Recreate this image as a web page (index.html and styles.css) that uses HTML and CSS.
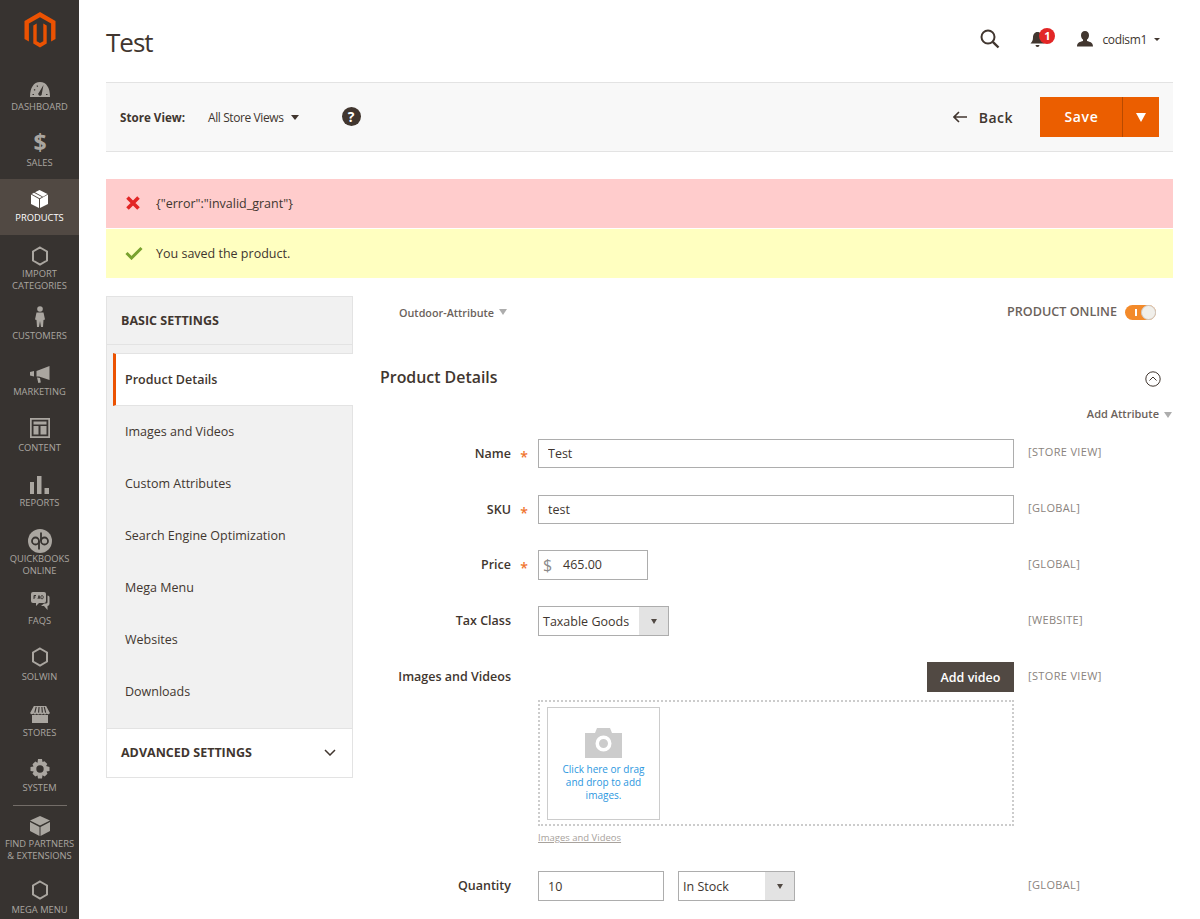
FILE: index.html
```html
<!DOCTYPE html>
<html lang="en">
<head>
<meta charset="utf-8">
<title>Test</title>
<link rel="stylesheet" href="styles.css">
</head>
<body>
<div class="app">
<nav class="sidebar">
  <div class="logo">
    <svg width="32" height="36" viewBox="0 0 32 36"><path fill="#eb5202" d="M16 0 0.500 9v18l4.400 2.600V11.600L16 5.200l11.100 6.400v18l4.400-2.600V9z"/><path fill="#eb5202" d="M16 31.100l-3.300-1.900V11.500L9.300 13.500v18L16 35.500l6.700-4V13.500l-3.400-2v17.700z"/></svg>
  </div>
  <a class="nav-item"><svg class="ic" width="20" height="15" viewBox="0 0 20 15"><path d="M10 0C3.500 0 0 6 0 15h20C20 6 16.500 0 10 0z"/><path d="M13.500 3 9 10.500a1.800 1.800 0 1 0 2.800 1.200z" fill="#373330"/><path d="M2.500 12.500H4M4 7.500l1.200.8M7 3.500l.6 1.200M16 12.500h1.500" stroke="#373330" stroke-width="1.200" fill="none"/></svg><span>Dashboard</span></a>
  <a class="nav-item"><svg class="ic dollar-ic" width="20" height="22" viewBox="0 0 20 22"><text class="dollar" x="10" y="20" text-anchor="middle">$</text></svg><span>Sales</span></a>
  <a class="nav-item active"><svg class="ic" width="17" height="18" viewBox="0 0 17 18"><path d="M0 4.500 8 9v9l-8-4z"/><path d="M9 9l8-4.500V14l-8 4z" fill="#fff"/><path d="M8.500 0 4 2.200l8 4.500L16.500 4zM3 2.800.8 4l7.700 4.200L11 7z" fill="#fff"/></svg><span>Products</span></a>
  <a class="nav-item two hexi"><svg class="ic" width="18" height="20" viewBox="0 0 18 20"><path class="hex" d="M9 1.500 16 5.500v9l-7 4-7-4v-9z"/></svg><span>Import Categories</span></a>
  <a class="nav-item tight"><svg class="ic" width="12" height="21" viewBox="0 0 12 21"><circle cx="6" cy="3" r="2.800"/><path d="M2.500 6.500h7L11 13.500 9.500 14 9 21H7l-1-6-1 6H3l-.5-7L1 13.500z"/></svg><span>Customers</span></a>
  <a class="nav-item tight"><svg class="ic" width="20" height="17" viewBox="0 0 20 17"><path d="M19.500 0v14L9 10.500H6.500V5L19.500 0zM0 6l4-1v5.500l-4-1zM7 11.500l3 .6.800 4.400-2.500.5z"/></svg><span>Marketing</span></a>
  <a class="nav-item"><svg class="ic" width="20" height="20" viewBox="0 0 20 20"><path fill-rule="evenodd" d="M0 0h20v20H0zM1.700 1.700v16.600h16.600V1.700zM3.500 3.500h13v3h-13zM3.500 8h5v8.500h-5zM10.500 8h6v8.500h-6z"/></svg><span>Content</span></a>
  <a class="nav-item tight"><svg class="ic" width="19" height="18" viewBox="0 0 19 18"><path d="M0 6h4v12H0zM7 0h4.500v18H7zM14.500 12H19v6h-4.500z"/></svg><span>Reports</span></a>
  <a class="nav-item two qb"><svg class="ic" width="24" height="24" viewBox="0 0 24 24"><circle cx="12" cy="12" r="12"/><path d="M11 12v8.500M13 12V3.500" stroke="#373330" stroke-width="1.800" fill="none"/><circle cx="7.500" cy="12" r="3.500" fill="none" stroke="#373330" stroke-width="1.800"/><circle cx="16.500" cy="12" r="3.500" fill="none" stroke="#373330" stroke-width="1.800"/></svg><span>QuickBooks Online</span></a>
  <a class="nav-item"><svg class="ic" width="20" height="19" viewBox="0 0 20 19"><path d="M3 0h11a2 2 0 0 1 2 2v7a2 2 0 0 1-2 2H9l-3 3v-3H3a2 2 0 0 1-2-2V2a2 2 0 0 1 2-2z"/><path d="M17.500 3.500c1.500 0 2 1 2 2v6c0 1.500-1 2.500-2 2.500v4l-3.500-4h-3l3-2.500h2c1.500 0 1.500-1 1.500-2z"/><path d="M4 3.500h2M4 3.500v3.500M4 5h1.500M8 7l1-3.500L10 7M12 3.500a1.200 1.700 0 1 0 .1 0" stroke="#373330" fill="none"/></svg><span>FAQs</span></a>
  <a class="nav-item"><svg class="ic" width="18" height="20" viewBox="0 0 18 20"><path class="hex" d="M9 1.500 16 5.500v9l-7 4-7-4v-9z"/></svg><span>Solwin</span></a>
  <a class="nav-item stores"><svg class="ic" width="22" height="17" viewBox="0 0 22 18"><path d="M2.500 9.500h17V18h-17z"/><path d="M4.500 0h13l4 7.500a2 2 0 0 1-3.500.5 2 2 0 0 1-3.500 0 2 2 0 0 1-3.500 0 2 2 0 0 1-3.500 0A2 2 0 0 1 4 8a2 2 0 0 1-3.500-.5z"/><path d="M7 1 5.500 7M10 1l-.5 6M13 1l.5 6M15.500 1 17 7" stroke="#373330" stroke-width="1.200" fill="none"/></svg><span>Stores</span></a>
  <a class="nav-item tight"><svg class="ic" width="20" height="20" viewBox="0 0 20 20"><path fill-rule="evenodd" d="M8 0h4l.5 3 2-.8 2.800 2.800-1.200 2L19.500 8v4l-3 .5 1 2.200-2.800 2.800-2.200-1.200L12 19.500H8l-.5-3-2.200 1L2.500 14.700l1.200-2.200L.5 12V8l3-.5-1-2.200L5.300 2.500l2.200 1.200zM10 6.300a3.700 3.700 0 1 0 0 7.400 3.700 3.700 0 0 0 0-7.400z"/></svg><span>System</span></a>
  <hr class="nav-sep">
  <a class="nav-item two partners"><svg class="ic" width="22" height="20" viewBox="0 0 22 20"><path d="M11 0l10 4.500-10 5L1 4.500z"/><path d="M1 6l9.500 5v9L1 15zM21 6l-9.500 5v9l9.500-5z"/></svg><span>Find Partners<br>&amp; Extensions</span></a>
  <a class="nav-item"><svg class="ic" width="18" height="20" viewBox="0 0 18 20"><path class="hex" d="M9 1.500 16 5.500v9l-7 4-7-4v-9z"/></svg><span>Mega Menu</span></a>
</nav>
<main class="main">
  <header class="topbar">
    <h1 class="title">Test</h1>
    <div class="tools">
      <svg class="tool-search" width="20" height="20" viewBox="0 0 20 20"><circle cx="8" cy="8" r="6.500" fill="none" stroke="#41362f" stroke-width="2"/><path d="M12.800 12.800 18.500 18.500" stroke="#41362f" stroke-width="2.400"/></svg>
      <div class="bell">
        <svg width="15" height="17" viewBox="0 0 15 17"><path fill="#41362f" d="M7.500 1C4.500 1 3 3.500 3 6.500c0 3-1 4.500-2.500 6h14C13 11 12 9.500 12 6.500 12 3.500 10.500 1 7.500 1zM5.500 14h4a2 2 0 0 1-4 0z"/></svg>
        <span class="badge">1</span>
      </div>
      <div class="user">
        <svg width="18" height="16" viewBox="0 0 18 16"><path fill="#41362f" d="M9 0c2.500 0 4 1.700 4 4.200 0 2-1 3.600-2 4.400v1.400c3 .8 6 1.600 6 5.500H1c0-3.900 3-4.700 6-5.500V8.600c-1-.8-2-2.400-2-4.400C5 1.700 6.500 0 9 0z"/></svg>
        <span class="user-name">codism1</span>
        <span class="caret small"></span>
      </div>
    </div>
  </header>
  <section class="actions">
    <div class="scope">
      <strong>Store View:</strong>
      <span class="scope-val">All Store Views</span>
      <span class="caret"></span>
      <span class="help">?</span>
    </div>
    <div class="action-btns">
      <button class="back"><svg width="14" height="12" viewBox="0 0 14 12"><path d="M6 1 1 6l5 5M1 6h13" fill="none" stroke="#41362f" stroke-width="1.600"/></svg>Back</button>
      <div class="save"><span class="save-main">Save</span><span class="save-drop"><i></i></span></div>
    </div>
  </section>
  <section class="messages">
    <div class="msg err"><svg width="14" height="14" viewBox="0 0 14 14"><path d="M1.500 1.500 12.500 12.500M12.500 1.500 1.500 12.500" stroke="#e22626" stroke-width="3.600"/></svg><span>{"error":"invalid_grant"}</span></div>
    <div class="msg ok"><svg width="18" height="14" viewBox="0 0 18 14"><path d="M1.500 7 6.500 12 16.500 2" fill="none" stroke="#79a22e" stroke-width="3"/></svg><span>You saved the product.</span></div>
  </section>
  <div class="content">
    <aside class="tabs">
      <div class="tab-head">Basic Settings</div>
      <ul class="tab-list">
        <li class="tab current">Product Details</li>
        <li class="tab">Images and Videos</li>
        <li class="tab">Custom Attributes</li>
        <li class="tab">Search Engine Optimization</li>
        <li class="tab">Mega Menu</li>
        <li class="tab">Websites</li>
        <li class="tab">Downloads</li>
      </ul>
      <div class="tab-foot">Advanced Settings<svg width="12" height="7" viewBox="0 0 12 7"><path d="M1 1l5 5 5-5" fill="none" stroke="#41362f" stroke-width="1.500"/></svg></div>
    </aside>
    <section class="form">
      <div class="form-top">
        <span class="attr-set">Outdoor-Attribute<i class="tri"></i></span>
        <span class="online">Product Online<span class="toggle"><span class="knob"></span></span></span>
      </div>
      <div class="sec-head">
        <h2>Product Details</h2>
        <svg width="16" height="16" viewBox="0 0 16 16"><circle cx="8" cy="8" r="7.200" fill="none" stroke="#41362f"/><path d="M4.500 9.500 8 6l3.500 3.500" fill="none" stroke="#41362f"/></svg>
      </div>
      <div class="add-attr">Add Attribute<i class="tri"></i></div>
      <div class="row hi name"><label>Name<em>*</em></label><div class="ctl"><input class="inp" value="Test"></div><span class="sc">[STORE VIEW]</span></div>
      <div class="row hi sku"><label>SKU<em>*</em></label><div class="ctl"><input class="inp" value="test"></div><span class="sc">[GLOBAL]</span></div>
      <div class="row lo"><label>Price<em>*</em></label><div class="ctl"><div class="price"><span>$</span>465.00</div></div><span class="sc">[GLOBAL]</span></div>
      <div class="row lo"><label>Tax Class</label><div class="ctl"><div class="sel tax">Taxable Goods<span class="sel-btn"><i></i></span></div></div><span class="sc">[WEBSITE]</span></div>
      <div class="row images">
        <label>Images and Videos</label>
        <div class="ctl">
          <div class="vid-row"><button class="add-video">Add video</button></div>
          <div class="gallery">
            <div class="upload">
              <svg width="37" height="30" viewBox="0 0 37 30"><path fill="#ccc" fill-rule="evenodd" d="M0 5h10l2-5h13l2 5h10v25H0zM18.500 7.500a8 8 0 1 0 0 16 8 8 0 0 0 0-16zM18.500 11a4.500 4.500 0 1 1 0 9 4.500 4.500 0 0 1 0-9z"/></svg>
              <p>Click here or drag and drop to add images.</p>
            </div>
          </div>
          <a class="caption">Images and Videos</a>
        </div>
        <span class="sc">[STORE VIEW]</span>
      </div>
      <div class="row qty"><label>Quantity</label><div class="ctl qty-ctl"><input class="inp qty-inp" value="10"><div class="sel stock">In Stock<span class="sel-btn"><i></i></span></div></div><span class="sc">[GLOBAL]</span></div>
    </section>
  </div>
</main>
</div>
</body>
</html>
```
FILE: styles.css
```css
*{box-sizing:border-box}
html,body{margin:0;padding:0;height:919px;overflow:hidden;background:#fff}
body{font-family:"Open Sans",sans-serif;color:#41362f;font-size:12.500px}
.app{display:flex;height:919px;overflow:hidden}
.sidebar{width:79px;flex:none;background:#373330;display:flex;flex-direction:column;overflow:hidden}
.logo{height:68px;flex:none;display:flex;justify-content:center;padding-top:12px}
.nav-item{height:55.700px;flex:none;display:flex;flex-direction:column;align-items:center;justify-content:flex-end;padding-bottom:10.500px;color:#aaa6a0;font-size:9.350px;line-height:12px;text-transform:uppercase;text-align:center}
.nav-item.two{height:62px;padding-bottom:5.500px}
.nav-item.active{background:#514943;color:#fff;padding-bottom:11.500px}
.nav-item.stores{padding-bottom:9.500px}
.nav-item.two.qb{padding-bottom:4.500px}
.nav-item span:last-child{display:block;padding:0 2px}
.nav-item .ic{fill:#aaa6a0;margin-bottom:4px;flex:none}
.nav-item .dollar-ic{overflow:visible}
.nav-item.tight .ic{margin-bottom:3px}
.nav-item.hexi .ic{margin-bottom:2px}
.nav-item.qb .ic{margin-bottom:0}
.nav-item .hex{fill:none;stroke:#aaa6a0;stroke-width:2}
.nav-item.active .ic{fill:#fff}
.dollar{font-size:23px;font-weight:700;fill:#aaa6a0}
.nav-sep{width:54px;height:1px;border:0;background:#736d68;margin:0 auto 3px;flex:none}
.nav-item.two.partners{padding:0 0 8.500px}
.partners .ic{margin-bottom:2px}
.partners span:last-child{padding:0}
.main{flex:1;padding:0 27px;min-width:0}
.topbar{height:83px;display:flex;justify-content:space-between;align-items:flex-start;border-bottom:1px solid #e3e3e3}
.title{margin:24px 0 0;font-size:26px;line-height:36px;font-weight:400;letter-spacing:-1px}
.tools{display:flex;align-items:center;height:20px;margin-top:29px;padding-right:13px}
.tool-search{margin-right:30px}
.bell{position:relative;width:15px;height:17px;margin-right:31px}
.bell svg{display:block}
.badge{position:absolute;left:9px;top:-3px;width:16px;height:16px;border-radius:50%;background:#e22626;color:#fff;font-size:11px;font-weight:700;line-height:16px;text-align:center}
.user{display:flex;align-items:center}
.user-name{font-size:12px;margin:0 7px 0 8px;color:#41362f;letter-spacing:-.35px}
.caret{display:inline-block;width:0;height:0;border-style:solid;border-width:5px 4.500px 0;border-color:#41362f transparent transparent}
.caret.small{border-width:3.500px 3.500px 0}
.actions{height:69px;background:#f8f8f8;border-bottom:1px solid #e3e3e3;display:flex;align-items:center;justify-content:space-between;padding:0 14px}
.scope{display:flex;align-items:center;font-size:12px}
.scope strong{font-weight:700;width:88px;font-size:11.650px}
.scope-val{letter-spacing:-.4px;margin-right:7px}
.help{width:19px;height:19px;border-radius:50%;background:#41362f;color:#fff;font-size:14px;font-weight:700;line-height:19px;text-align:center;margin-left:43px;margin-top:-2px}
.action-btns{display:flex;align-items:center}
.back{background:none;border:0;padding:0;margin-right:27px;font:600 14px "Open Sans",sans-serif;color:#41362f;display:flex;align-items:center;gap:12px;letter-spacing:.5px}
.save{display:flex;width:119px;height:40px;background:#eb5e00;color:#fff}
.save-main{width:83px;text-align:center;font-weight:600;font-size:14px;line-height:40px;letter-spacing:.7px;border-right:1px solid #b84a00;padding-left:1px}
.save-drop{flex:1;display:flex;align-items:center;justify-content:center}
.save-drop i{width:0;height:0;border-style:solid;border-width:9px 5.500px 0;border-color:#fff transparent transparent}
.messages{margin-top:27px;display:flex;flex-direction:column;gap:1px}
.msg{height:49px;display:flex;align-items:center;padding-left:20px;font-size:12.500px;padding-bottom:1px}
.msg.err{background:#fcc}
.msg.err svg{margin-right:16px}
.msg.ok{background:#ffffc0;padding-left:19px}
.msg.ok svg{margin-right:13px}
.content{display:flex;margin-top:18px}
.tabs{width:247px;flex:none}
.tab-head{height:49px;background:#f1f1f1;border:1px solid #e3e3e3;padding-left:14px;line-height:47px;font-weight:700;font-size:12.500px;text-transform:uppercase}
.tab-list{list-style:none;margin:0;padding:8px 0 0 6px;background:#f1f1f1;border-left:1px solid #e3e3e3;border-right:1px solid #e3e3e3;height:383px}
.tab{height:52px;line-height:54px;padding-left:12px;font-size:12.500px}
.tab.current{background:#fff;border-left:3px solid #eb5202;font-weight:600;padding-left:9px;border-top:1px solid #e3e3e3;border-bottom:1px solid #e3e3e3;margin-right:-1px;height:53px;margin-bottom:-1px;line-height:52px}
.tab-foot{height:50px;border:1px solid #e3e3e3;padding:0 16px 1px 14px;display:flex;align-items:center;justify-content:space-between;font-weight:700;font-size:12.500px;text-transform:uppercase}
.form{flex:1;padding-left:27px;min-width:0}
.form-top{height:32px;display:flex;justify-content:space-between;align-items:center;padding:0 17px 0 19px}
.attr-set{font-size:10.800px;font-weight:600;color:#6b625b;display:flex;align-items:center}
.tri{display:inline-block;width:0;height:0;border-style:solid;border-width:6px 4px 0;border-color:#adadad transparent transparent;margin-left:5px}
.online{font-weight:600;font-size:12.600px;text-transform:uppercase;color:#6b625b;display:flex;align-items:center;line-height:15px;padding-bottom:2px}
.toggle{width:31px;height:15px;border-radius:8px;background:#f38a2a;margin-left:8px;position:relative;display:block;top:1px}
.toggle:before{content:"";position:absolute;left:10px;top:4px;width:1.500px;height:7px;background:#fff}
.knob{position:absolute;right:0;top:0;width:15px;height:15px;border-radius:50%;background:#f1efea;border:1px solid #ccc}
.sec-head{display:flex;justify-content:space-between;align-items:center;height:36px;margin-top:32px;padding-right:12px}
.sec-head h2{margin:0 0 2px;font-size:15.900px;font-weight:600}
.sec-head svg{margin-top:2px}
.add-attr{margin-top:11px;height:14px;text-align:right;font-size:11px;font-weight:600;color:#6b625b;line-height:14px;padding-right:1px}
.row{display:grid;grid-template-columns:158px 476px 1fr;align-items:start;margin-top:26px}
.row.name{margin-top:18px}
.row.sku{margin-top:27px}
.row label{display:block;padding-right:27px;text-align:right;font-weight:600;font-size:12.500px;line-height:30px;position:relative}
.row.lo label{line-height:29px}
.row.hi label{line-height:29px}
.row label em{position:absolute;right:10px;top:3px;color:#f0742e;font-style:normal;font-size:14px;font-weight:600}
.sc{padding-left:14px;font-size:11px;color:#8a837d;line-height:27px;letter-spacing:.35px}
.row.hi .sc{line-height:26px}
.inp{display:block;width:100%;height:30px;border:1px solid #adadad;padding:0 9px;font:12.500px "Open Sans",sans-serif;color:#41362f;background:#fff;outline:0}
.row.hi .inp{height:29px}
.price{width:110px;height:30px;border:1px solid #adadad;font-size:12.500px;line-height:28px;position:relative;padding-left:24px}
.price span{position:absolute;left:4px;top:0;color:#8a8a8a;font-size:16px;font-weight:400}
.sel{position:relative;height:30px;border:1px solid #adadad;line-height:30px;padding-left:4px;font-size:12.500px}
.tax{width:131px}
.sel-btn{position:absolute;right:0;top:0;width:29px;height:28px;background:#e3e3e3;display:flex;align-items:center;justify-content:center}
.sel-btn i{width:0;height:0;border-style:solid;border-width:5px 3.500px 0;border-color:#514943 transparent transparent}
.vid-row{display:flex;justify-content:flex-end}
.add-video{width:87px;height:30px;background:#514943;color:#fff;border:0;font:600 12.500px "Open Sans",sans-serif;padding:0}
.gallery{height:126px;margin-top:8px;border:2px dotted #ccc;padding:5px 7px}
.upload{width:113px;height:113px;border:1px solid #ccc;text-align:center;padding-top:20px;color:#2b97e0}
.upload svg{display:block;margin:0 auto}
.upload p{margin:5px 14px 0;font-size:10px;line-height:13px}
.caption{display:block;margin-top:5px;font-size:9.500px;line-height:13px;color:#a8a29c;text-decoration:underline}
.row.images .sc{line-height:28px}
.qty{margin-top:27px}
.qty-ctl{display:flex;gap:14px}
.qty-inp{width:126px}
.stock{width:117px}
```
